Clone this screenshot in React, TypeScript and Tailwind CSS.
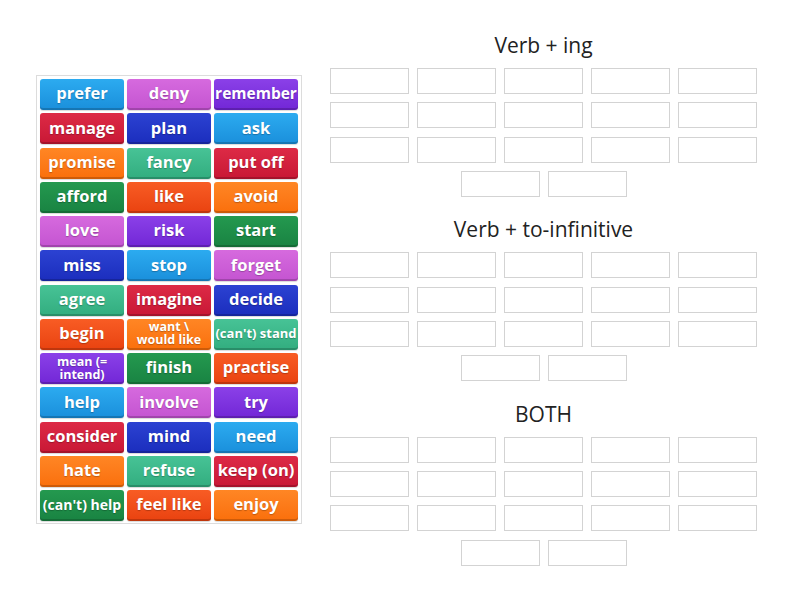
import React from 'react';

type Tone = 'blue' | 'pink' | 'purple' | 'crimson' | 'navy' | 'orange' | 'teal' | 'green' | 'flame';

const toneClass: Record<Tone, string> = {
  blue: 'from-[#2cabf0] to-[#1a8fdb]',
  pink: 'from-[#d66ade] to-[#c454d1]',
  purple: 'from-[#8b40e8] to-[#7226d6]',
  crimson: 'from-[#dd2a46] to-[#c81735]',
  navy: 'from-[#2c42d2] to-[#1b2dbd]',
  orange: 'from-[#ff8624] to-[#fa6f0a]',
  teal: 'from-[#47c396] to-[#32ad7f]',
  green: 'from-[#24994f] to-[#198342]',
  flame: 'from-[#f85c24] to-[#e9420f]',
};

type Tile = { label: string; tone: Tone; size?: string; two?: boolean };

const tiles: Tile[] = [
  { label: 'prefer', tone: 'blue' },
  { label: 'deny', tone: 'pink' },
  { label: 'remember', tone: 'purple', size: 'text-[15.5px]' },
  { label: 'manage', tone: 'crimson' },
  { label: 'plan', tone: 'navy' },
  { label: 'ask', tone: 'blue' },
  { label: 'promise', tone: 'orange' },
  { label: 'fancy', tone: 'teal' },
  { label: 'put off', tone: 'crimson' },
  { label: 'afford', tone: 'green' },
  { label: 'like', tone: 'flame' },
  { label: 'avoid', tone: 'orange' },
  { label: 'love', tone: 'pink' },
  { label: 'risk', tone: 'purple' },
  { label: 'start', tone: 'green' },
  { label: 'miss', tone: 'navy' },
  { label: 'stop', tone: 'blue' },
  { label: 'forget', tone: 'pink' },
  { label: 'agree', tone: 'teal' },
  { label: 'imagine', tone: 'crimson' },
  { label: 'decide', tone: 'navy' },
  { label: 'begin', tone: 'flame' },
  { label: 'want \\ would like', tone: 'orange', two: true },
  { label: "(can't) stand", tone: 'teal', size: 'text-[13px]' },
  { label: 'mean (= intend)', tone: 'purple', two: true },
  { label: 'finish', tone: 'green' },
  { label: 'practise', tone: 'flame' },
  { label: 'help', tone: 'blue' },
  { label: 'involve', tone: 'pink' },
  { label: 'try', tone: 'purple' },
  { label: 'consider', tone: 'crimson' },
  { label: 'mind', tone: 'navy' },
  { label: 'need', tone: 'blue' },
  { label: 'hate', tone: 'orange' },
  { label: 'refuse', tone: 'teal' },
  { label: 'keep (on)', tone: 'crimson' },
  { label: "(can't) help", tone: 'green', size: 'text-[14px]' },
  { label: 'feel like', tone: 'flame' },
  { label: 'enjoy', tone: 'orange' },
];

const groups = ['Verb + ing', 'Verb + to-infinitive', 'BOTH'];

function Slot() {
  return <div className="w-[79px] h-[26px] border border-[#d3d3d3] bg-white" />;
}

function Group({ title }: { title: string }) {
  return (
    <div className="flex flex-col items-center">
      <h2 className="h-[28px] text-[21px] leading-[28px] text-[#222] font-['Open_Sans',sans-serif]">{title}</h2>
      <div className="mt-[9px] flex flex-col items-center gap-[8.3px]">
        {[0, 1, 2].map((r) => (
          <div key={r} className="flex gap-[8px]">
            {[0, 1, 2, 3, 4].map((c) => (
              <Slot key={c} />
            ))}
          </div>
        ))}
        <div className="flex gap-[8px]">
          <Slot />
          <Slot />
        </div>
      </div>
    </div>
  );
}

export default function App() {
  return (
    <div className="w-[800px] h-[600px] bg-white flex items-start font-['Open_Sans',sans-serif]">
      <div className="ml-[36px] mt-[75px] w-[266px] border border-[#dcdcdc] p-[3px] pb-[2px]">
        <div className="grid grid-cols-[84px_84px_84px] auto-rows-[31px] gap-x-[3px] gap-y-[3.25px]">
          {tiles.map((t) => (
            <div
              key={t.label}
              className={`flex items-center justify-center pb-[2px] rounded-[3px] bg-linear-to-b ${toneClass[t.tone]} shadow-[inset_0_-2px_0_rgba(0,0,0,0.18),0_1px_1px_rgba(0,0,0,0.15)] text-white font-bold text-center [text-shadow:0_1px_1px_rgba(0,0,0,0.25)] whitespace-nowrap overflow-hidden`}
            >
              {t.two ? (
                <span className="text-[12.5px] leading-[13px] whitespace-normal px-2">{t.label}</span>
              ) : (
                <span className={`${t.size ?? 'text-[16.5px]'} leading-none`}>{t.label}</span>
              )}
            </div>
          ))}
        </div>
      </div>
      <div className="ml-[28px] mt-[31px] flex flex-col gap-[18.5px]">
        {groups.map((g) => (
          <Group key={g} title={g} />
        ))}
      </div>
    </div>
  );
}
